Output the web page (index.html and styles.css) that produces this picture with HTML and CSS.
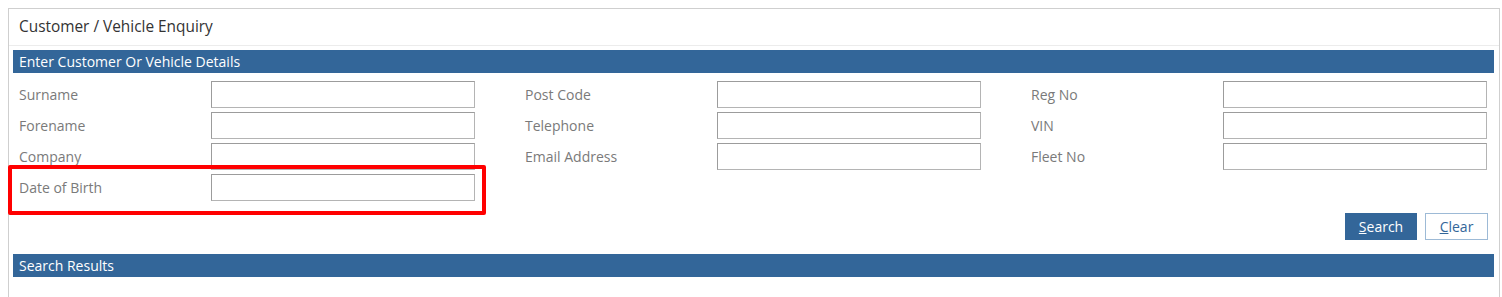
FILE: index.html
```html
<!DOCTYPE html>
<html>
<head>
<meta charset="utf-8">
<link rel="stylesheet" href="styles.css">
</head>
<body>
<div class="panel">
  <div class="panel-title">Customer / Vehicle Enquiry</div>
  <div class="bar">Enter Customer Or Vehicle Details</div>
  <div class="form">
    <div class="col">
      <div class="row"><label>Surname</label><input type="text"></div>
      <div class="row"><label>Forename</label><input type="text"></div>
      <div class="row"><label>Company</label><input type="text"></div>
      <div class="row"><label>Date of Birth</label><input type="text"></div>
    </div>
    <div class="col">
      <div class="row"><label>Post Code</label><input type="text"></div>
      <div class="row"><label>Telephone</label><input type="text"></div>
      <div class="row"><label>Email Address</label><input type="text"></div>
    </div>
    <div class="col">
      <div class="row"><label>Reg No</label><input type="text"></div>
      <div class="row"><label>VIN</label><input type="text"></div>
      <div class="row"><label>Fleet No</label><input type="text"></div>
    </div>
  </div>
  <div class="actions">
    <button class="btn btn-primary"><u>S</u>earch</button>
    <button class="btn btn-secondary"><u>C</u>lear</button>
  </div>
  <div class="bar">Search Results</div>
  <div class="highlight"></div>
</div>
</body>
</html>
```

FILE: styles.css
```css
html, body {
  margin: 0;
  padding: 0;
  background: #fff;
}
body {
  padding: 8px 2px 0 8px;
  font-family: "Open Sans", "Noto Sans", sans-serif;
  font-size: 14px;
  overflow: hidden;
}
.panel {
  position: relative;
  border: 1px solid #cfcfcf;
  border-bottom: none;
  padding: 0 5px 30px 4px;
  height: 300px;
  box-sizing: border-box;
}
.panel-title {
  height: 36px;
  line-height: 36px;
  margin: 0 -5px 4px -4px;
  padding-left: 10px;
  color: #333;
  font-size: 15.4px;
  border-bottom: 1px solid #ececec;
}
.bar {
  background: #336699;
  color: #fff;
  height: 23px;
  line-height: 23px;
  padding-left: 6px;
}
.form {
  display: flex;
  gap: 50px;
  padding: 8px 0 0 6px;
}
.col {
  display: flex;
  flex-direction: column;
  gap: 4px;
}
.row {
  display: flex;
  align-items: center;
  height: 27px;
}
.row label {
  width: 192px;
  color: #7a7a7a;
}
.row input {
  width: 264px;
  height: 27px;
  box-sizing: border-box;
  border: 1px solid #9c9c9c;
  border-right-color: #b4b4b4;
  border-bottom-color: #b4b4b4;
  margin: 0;
  padding: 0 4px;
}
.actions {
  display: flex;
  justify-content: flex-end;
  gap: 8px;
  padding: 12px 6px 14px 0;
}
.btn {
  height: 27px;
  box-sizing: border-box;
  font-family: inherit;
  font-size: 14px;
  margin: 0;
  padding: 0;
  cursor: pointer;
}
.btn-primary {
  width: 72px;
  background: #336699;
  color: #fff;
  border: none;
}
.btn-secondary {
  width: 63px;
  background: #fff;
  color: #336699;
  border: 1px solid #9dbad6;
}
.highlight {
  position: absolute;
  left: -1px;
  top: 156px;
  width: 478px;
  height: 50px;
  box-sizing: border-box;
  border: 4px solid #ff0000;
  border-radius: 2px;
}
```
